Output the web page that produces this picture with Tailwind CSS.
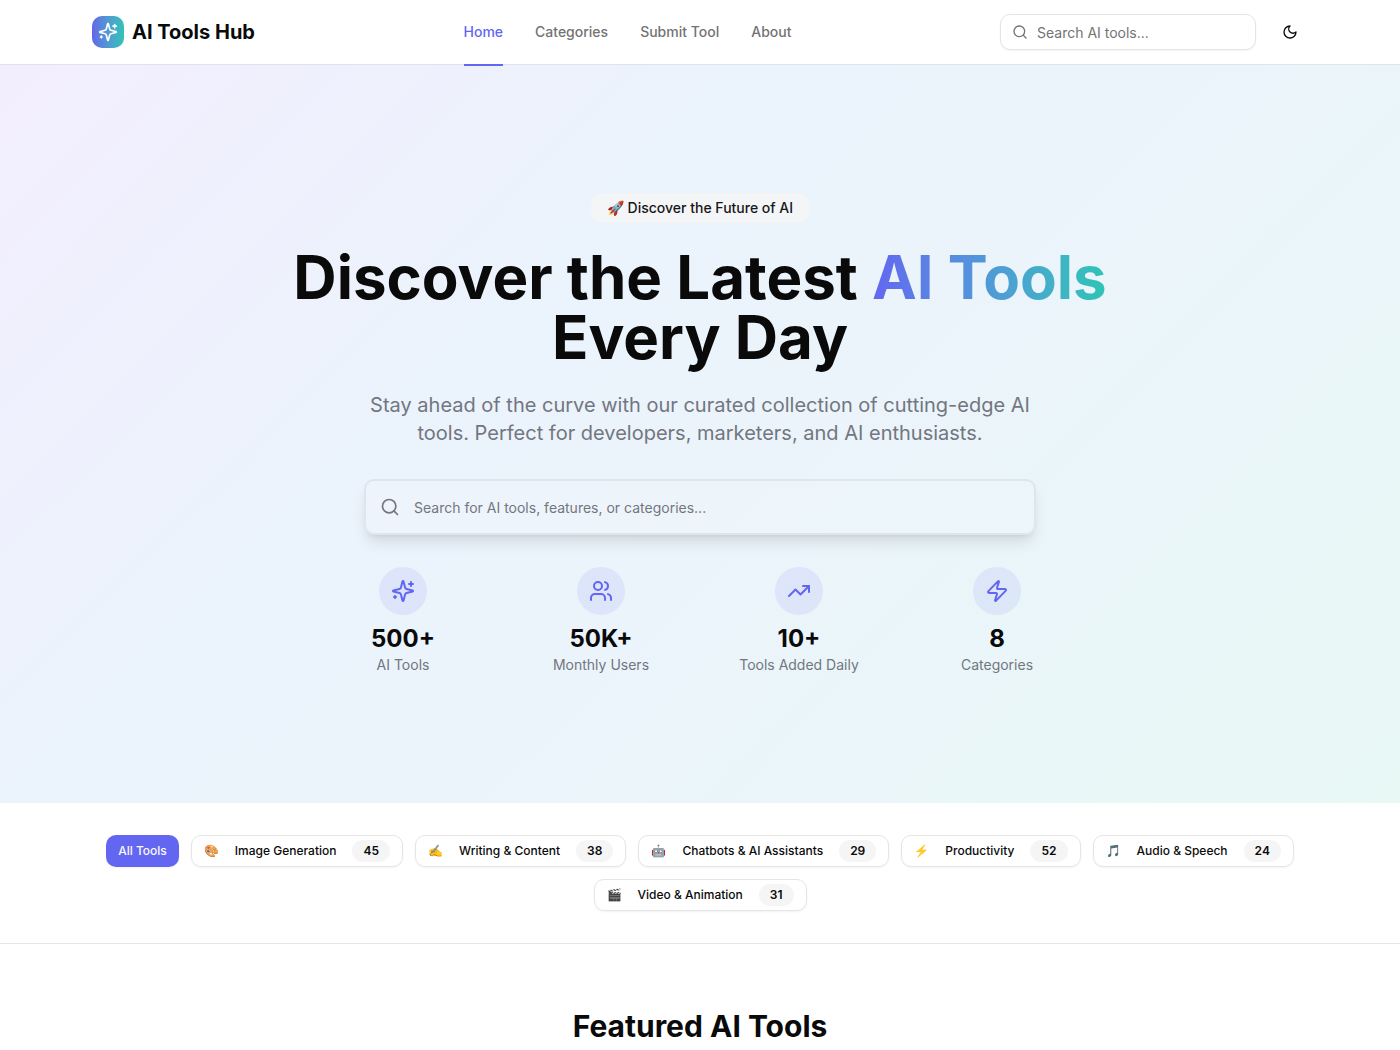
<!DOCTYPE html>
<html lang="en">
<head>
  <meta charset="UTF-8" />
  <meta name="viewport" content="width=device-width, initial-scale=1" />
  <title>AI Tools Hub</title>
  <script src="https://cdn.jsdelivr.net/npm/@tailwindcss/browser@4"></script>
</head>
<body class="bg-white text-[#0a0a0a] font-[Inter,sans-serif] overflow-x-hidden">

  <!-- Header -->
  <header class="border-b border-[#dfe3ec] bg-white relative z-10">
    <div class="max-w-7xl mx-auto px-8 h-16 flex items-center justify-between">
      <a href="#" class="flex items-center gap-2">
        <span class="w-8 h-8 rounded-[10px] bg-linear-to-r from-[#6366e8] to-[#2dc4b6] flex items-center justify-center text-white">
          <svg class="w-5 h-5" viewBox="0 0 24 24" fill="none" stroke="currentColor" stroke-width="2" stroke-linecap="round" stroke-linejoin="round">
            <path d="M9.937 15.5A2 2 0 0 0 8.5 14.063l-6.135-1.582a.5.5 0 0 1 0-.962L8.5 9.936A2 2 0 0 0 9.937 8.5l1.582-6.135a.5.5 0 0 1 .963 0L14.063 8.5A2 2 0 0 0 15.5 9.937l6.135 1.581a.5.5 0 0 1 0 .964L15.5 14.063a2 2 0 0 0-1.437 1.437l-1.582 6.135a.5.5 0 0 1-.963 0z" />
            <path d="M20 3v4M22 5h-4M4 17v2M5 18H3" />
          </svg>
        </span>
        <span class="text-xl font-bold">AI Tools Hub</span>
      </a>

      <nav class="h-full flex items-center gap-8 text-sm font-medium text-[#737373]">
        <a href="#" class="relative h-full flex items-center text-[#6366f1]">
          Home
          <span class="absolute inset-x-0 -bottom-0.5 h-0.5 bg-[#6366f1]"></span>
        </a>
        <a href="#">Categories</a>
        <a href="#">Submit Tool</a>
        <a href="#">About</a>
      </nav>

      <div class="flex items-center gap-4">
        <div class="relative">
          <svg class="absolute left-3 top-2.5 w-4 h-4 text-[#737373]" viewBox="0 0 24 24" fill="none" stroke="currentColor" stroke-width="2" stroke-linecap="round" stroke-linejoin="round">
            <circle cx="11" cy="11" r="8" />
            <path d="m21 21-4.3-4.3" />
          </svg>
          <input type="search" aria-label="Search AI tools" placeholder="Search AI tools..." class="w-64 h-9 pl-9 pr-3 rounded-[10px] border border-[#e5e5e5] bg-white text-sm shadow-xs placeholder:text-[#737373]" />
        </div>
        <button type="button" aria-label="Toggle theme" class="w-9 h-9 flex items-center justify-center rounded-[10px]">
          <svg class="w-4 h-4" viewBox="0 0 24 24" fill="none" stroke="currentColor" stroke-width="2" stroke-linecap="round" stroke-linejoin="round">
            <path d="M12 3a6 6 0 0 0 9 9 9 9 0 1 1-9-9Z" />
          </svg>
        </button>
      </div>
    </div>
  </header>

  <!-- Hero -->
  <section class="py-32 px-8 bg-[linear-gradient(135deg,#f3eefe_0%,#ebf3fc_35%,#ebf4fb_55%,#e8f8f5_100%)]">
    <div class="max-w-4xl mx-auto flex flex-col items-center text-center">
      <span class="px-4 py-1 h-[30px] rounded-[10px] bg-[#f4f5f7] text-sm font-medium leading-[22px] text-[#171717]">🚀 Discover the Future of AI</span>

      <h1 class="mt-6 text-6xl leading-none font-bold">
        Discover the Latest
        <span class="bg-linear-to-r from-[#6366f1] to-[#2dc4b6] bg-clip-text text-transparent">AI Tools</span>
        Every Day
      </h1>

      <p class="mt-6 max-w-2xl text-xl leading-7 text-[#737680]">
        Stay ahead of the curve with our curated collection of cutting-edge AI tools. Perfect for developers, marketers, and AI enthusiasts.
      </p>

      <div class="mt-8 relative w-full max-w-2xl">
        <svg class="absolute left-4 top-[18px] w-5 h-5 text-[#737680]" viewBox="0 0 24 24" fill="none" stroke="currentColor" stroke-width="2" stroke-linecap="round" stroke-linejoin="round">
          <circle cx="11" cy="11" r="8" />
          <path d="m21 21-4.3-4.3" />
        </svg>
        <input type="search" aria-label="Search for AI tools" placeholder="Search for AI tools, features, or categories..." class="block w-full h-14 pl-12 pr-4 rounded-[10px] border-2 border-[#dfe5ea] bg-white/10 text-sm shadow-lg placeholder:text-[#737680]" />
      </div>

      <div class="mt-8 w-full max-w-3xl grid grid-cols-4 gap-6">
        <div class="flex flex-col items-center">
          <span class="w-12 h-12 rounded-full bg-[#6366f1]/10 text-[#6366f1] flex items-center justify-center">
            <svg class="w-6 h-6" viewBox="0 0 24 24" fill="none" stroke="currentColor" stroke-width="2" stroke-linecap="round" stroke-linejoin="round">
              <path d="M9.937 15.5A2 2 0 0 0 8.5 14.063l-6.135-1.582a.5.5 0 0 1 0-.962L8.5 9.936A2 2 0 0 0 9.937 8.5l1.582-6.135a.5.5 0 0 1 .963 0L14.063 8.5A2 2 0 0 0 15.5 9.937l6.135 1.581a.5.5 0 0 1 0 .964L15.5 14.063a2 2 0 0 0-1.437 1.437l-1.582 6.135a.5.5 0 0 1-.963 0z" />
              <path d="M20 3v4M22 5h-4M4 17v2M5 18H3" />
            </svg>
          </span>
          <span class="mt-2 text-2xl font-bold">500+</span>
          <span class="text-sm text-[#737680]">AI Tools</span>
        </div>
        <div class="flex flex-col items-center">
          <span class="w-12 h-12 rounded-full bg-[#6366f1]/10 text-[#6366f1] flex items-center justify-center">
            <svg class="w-6 h-6" viewBox="0 0 24 24" fill="none" stroke="currentColor" stroke-width="2" stroke-linecap="round" stroke-linejoin="round">
              <path d="M16 21v-2a4 4 0 0 0-4-4H6a4 4 0 0 0-4 4v2" />
              <circle cx="9" cy="7" r="4" />
              <path d="M22 21v-2a4 4 0 0 0-3-3.87M16 3.13a4 4 0 0 1 0 7.75" />
            </svg>
          </span>
          <span class="mt-2 text-2xl font-bold">50K+</span>
          <span class="text-sm text-[#737680]">Monthly Users</span>
        </div>
        <div class="flex flex-col items-center">
          <span class="w-12 h-12 rounded-full bg-[#6366f1]/10 text-[#6366f1] flex items-center justify-center">
            <svg class="w-6 h-6" viewBox="0 0 24 24" fill="none" stroke="currentColor" stroke-width="2" stroke-linecap="round" stroke-linejoin="round">
              <path d="M22 7 13.5 15.5 8.5 10.5 2 17" />
              <path d="M16 7h6v6" />
            </svg>
          </span>
          <span class="mt-2 text-2xl font-bold">10+</span>
          <span class="text-sm text-[#737680]">Tools Added Daily</span>
        </div>
        <div class="flex flex-col items-center">
          <span class="w-12 h-12 rounded-full bg-[#6366f1]/10 text-[#6366f1] flex items-center justify-center">
            <svg class="w-6 h-6" viewBox="0 0 24 24" fill="none" stroke="currentColor" stroke-width="2" stroke-linecap="round" stroke-linejoin="round">
              <path d="M4 14a1 1 0 0 1-.78-1.63l9.9-10.2a.5.5 0 0 1 .86.46l-1.92 6.02A1 1 0 0 0 13 10h7a1 1 0 0 1 .78 1.63l-9.9 10.2a.5.5 0 0 1-.86-.46l1.92-6.02A1 1 0 0 0 11 14z" />
            </svg>
          </span>
          <span class="mt-2 text-2xl font-bold">8</span>
          <span class="text-sm text-[#737680]">Categories</span>
        </div>
      </div>
    </div>
  </section>

  <!-- Category filters -->
  <section class="border-b border-[#e5e5e5]">
    <div class="max-w-7xl mx-auto px-8 py-8 flex flex-wrap justify-center gap-3 text-xs font-medium">
      <button type="button" class="h-8 px-3 rounded-[10px] bg-[#6366f1] text-[#fafafa] shadow-xs">All Tools</button>
      <button type="button" class="h-8 px-3 flex items-center gap-4 rounded-[10px] border border-[#e5e5e5] shadow-xs">
        <span>🎨</span>Image Generation
        <span class="px-2.5 py-0.5 rounded-full border border-transparent bg-[#f5f5f5] font-semibold">45</span>
      </button>
      <button type="button" class="h-8 px-3 flex items-center gap-4 rounded-[10px] border border-[#e5e5e5] shadow-xs">
        <span>✍️</span>Writing &amp; Content
        <span class="px-2.5 py-0.5 rounded-full border border-transparent bg-[#f5f5f5] font-semibold">38</span>
      </button>
      <button type="button" class="h-8 px-3 flex items-center gap-4 rounded-[10px] border border-[#e5e5e5] shadow-xs">
        <span>🤖</span>Chatbots &amp; AI Assistants
        <span class="px-2.5 py-0.5 rounded-full border border-transparent bg-[#f5f5f5] font-semibold">29</span>
      </button>
      <button type="button" class="h-8 px-3 flex items-center gap-4 rounded-[10px] border border-[#e5e5e5] shadow-xs">
        <span>⚡</span>Productivity
        <span class="px-2.5 py-0.5 rounded-full border border-transparent bg-[#f5f5f5] font-semibold">52</span>
      </button>
      <button type="button" class="h-8 px-3 flex items-center gap-4 rounded-[10px] border border-[#e5e5e5] shadow-xs">
        <span>🎵</span>Audio &amp; Speech
        <span class="px-2.5 py-0.5 rounded-full border border-transparent bg-[#f5f5f5] font-semibold">24</span>
      </button>
      <button type="button" class="h-8 px-3 flex items-center gap-4 rounded-[10px] border border-[#e5e5e5] shadow-xs">
        <span>🎬</span>Video &amp; Animation
        <span class="px-2.5 py-0.5 rounded-full border border-transparent bg-[#f5f5f5] font-semibold">31</span>
      </button>
    </div>
  </section>

  <!-- Featured -->
  <section class="max-w-7xl mx-auto px-8 pt-16">
    <h2 class="text-3xl font-bold text-center">Featured AI Tools</h2>
  </section>

</body>
</html>
